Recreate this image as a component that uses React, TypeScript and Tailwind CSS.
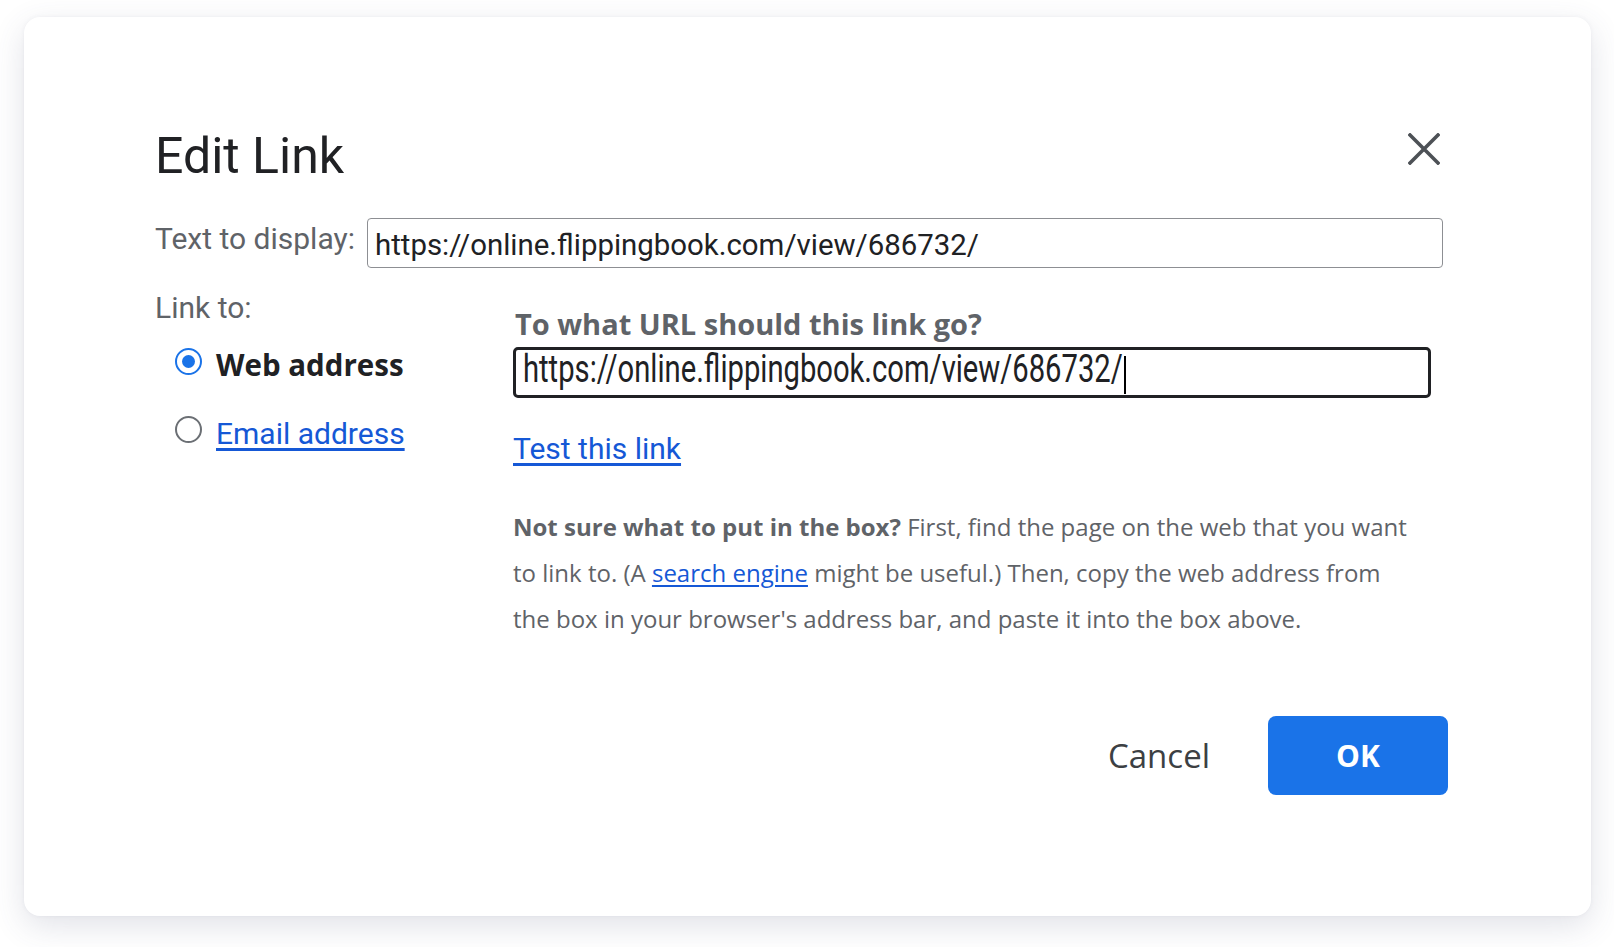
import { useState } from 'react';

function Radio({ checked }: { checked: boolean }) {
  return (
    <span
      className={
        'mt-[-3px] flex h-[27px] w-[27px] shrink-0 items-center justify-center rounded-full border-[2.5px] ' +
        (checked ? 'border-[#1a73e8]' : 'border-[#6b6f74]')
      }
    >
      {checked && <span className="h-[13px] w-[13px] rounded-full bg-[#1a73e8]" />}
    </span>
  );
}

export default function App() {
  const [linkType, setLinkType] = useState<'web' | 'email'>('web');
  const url = 'https://online.flippingbook.com/view/686732/';

  return (
    <div className="h-[947px] w-full bg-white pl-[24px] pt-[17px] font-['Roboto',sans-serif]">
      <div className="flex h-[899px] w-[1567px] flex-col rounded-[16px] bg-white pb-[121px] pl-[131px] pr-[148px] pt-[114px] shadow-[0_10px_32px_rgba(70,76,110,0.16),0_0_4px_rgba(70,76,110,0.06)]">
        {/* header */}
        <div className="flex items-start justify-between">
          <h2 className="text-[50px] leading-none text-[#202124]">Edit Link</h2>
          <button className="mr-[3px] mt-[2px] text-[#4d5156]">
            <svg width="32" height="32" viewBox="0 0 32 32" fill="none">
              <path d="M2 2L30 30M30 2L2 30" stroke="currentColor" strokeWidth="3.6" strokeLinecap="square" />
            </svg>
          </button>
        </div>

        {/* text to display */}
        <div className="mt-[37px] flex items-start gap-[12px]">
          <label className="mt-[6px] text-[30px] leading-none text-[#5f6368]">Text to display:</label>
          <div className="h-[50px] flex-1 rounded-[4px] border border-[#8d8f93] pl-[7px] pt-[12px] text-[29.4px] leading-none text-[#202124]">
            {url}
          </div>
        </div>

        {/* link to */}
        <div className="mt-[25px] flex items-start">
          <div className="flex w-[358px] shrink-0 flex-col">
            <span className="text-[30px] leading-none text-[#5f6368]">Link to:</span>
            <div
              className="ml-[20px] mt-[28px] flex cursor-pointer items-start gap-[14px]"
              onClick={() => setLinkType('web')}
            >
              <Radio checked={linkType === 'web'} />
              <span className="mt-[-1px] font-['Open_Sans',sans-serif] text-[29.5px] font-bold leading-none text-[#202124]">
                Web address
              </span>
            </div>
            <div
              className="ml-[20px] mt-[39px] flex cursor-pointer items-start gap-[14px]"
              onClick={() => setLinkType('email')}
            >
              <Radio checked={linkType === 'email'} />
              <a className="text-[30px] leading-none text-[#1558d6] underline underline-offset-[4px]">
                Email address
              </a>
            </div>
          </div>

          <div className="mr-[12px] mt-[16px] flex flex-1 flex-col">
            <span className="pl-[2px] font-['Open_Sans',sans-serif] text-[29px] font-bold leading-none text-[#5f6368]">
              To what URL should this link go?
            </span>
            <div className="mt-[9px] flex h-[51px] items-start rounded-[5px] border-[3px] border-[#202124] pl-[7px] pt-[8px]">
              <span className="inline-block origin-[50%_84%] scale-y-[1.3] text-[29.2px] leading-none text-[#202124]">
                {url}
              </span>
              <span className="ml-px mt-[-2px] inline-block h-[38px] w-[2px] bg-black" />
            </div>
            <a className="mt-[36px] self-start text-[30px] leading-none text-[#1558d6] underline underline-offset-[4px]">
              Test this link
            </a>
            <p className="mt-[40px] font-['Open_Sans',sans-serif] text-[24px] leading-[46px] text-[#5f6368]">
              <b className="font-bold">Not sure what to put in the box?</b> First, find the page on the web that you want
              <br />
              to link to. (A <a className="text-[#1558d6] underline underline-offset-[3px]">search engine</a> might be
              useful.) Then, copy the web address from
              <br />
              the box in your browser's address bar, and paste it into the box above.
            </p>
          </div>
        </div>

        {/* buttons */}
        <div className="-mr-[5px] mt-auto flex items-center justify-end gap-[58px] font-['Open_Sans',sans-serif]">
          <button className="text-[33px] leading-none text-[#3c4043]">Cancel</button>
          <button className="h-[79px] w-[180px] rounded-[8px] bg-[#1a73e8] text-[30px] font-bold leading-none text-white">
            OK
          </button>
        </div>
      </div>
    </div>
  );
}
